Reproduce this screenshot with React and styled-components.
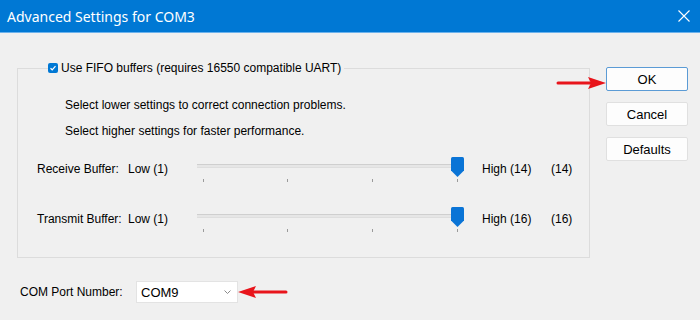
import React from "react";
import styled, { createGlobalStyle } from "styled-components";

const Global = createGlobalStyle`
  html, body {
    margin: 0;
    background: #f0f0f0;
  }
  body {
    font-family: "Liberation Sans", Arial, sans-serif;
    font-size: 12px;
    color: #000;
  }
`;

const Window = styled.div`
  width: 700px;
  height: 320px;
  background: #f0f0f0;
  overflow: hidden;
`;

const TitleBar = styled.div`
  height: 32px;
  background: #0078d4;
  border-bottom: 1px solid #6cb2ec;
  display: flex;
  align-items: center;
  justify-content: space-between;
  padding: 0 10px 0 7px;
  color: #fff;
  font-family: "Noto Sans", "Open Sans", sans-serif;
  font-size: 14px;
`;

const Close = styled.svg`
  width: 12px;
  height: 12px;
`;

const Body = styled.div`
  display: flex;
  align-items: flex-start;
  padding-left: 17px;
`;

const LeftCol = styled.div`
  display: flex;
  flex-direction: column;
`;

const Group = styled.fieldset`
  margin: 28px 0 0 0;
  padding: 0 0 13px 19px;
  width: 552px;
  min-width: 0;
  border: 1px solid #dcdcdc;
`;

const Legend = styled.legend`
  margin-left: 11px;
  padding: 0 3px 0 0;
  line-height: 14px;
  display: flex;
  align-items: center;
  gap: 3px;
`;

const Check = styled.span`
  width: 10px;
  height: 10px;
  border-radius: 2px;
  background: #0078d4;
  display: inline-flex;
  align-items: center;
  justify-content: center;
`;

const Notes = styled.div`
  margin-top: 17px;
  padding-left: 28px;
`;

const Note = styled.div`
  height: 26px;
  line-height: 26px;
`;

const SliderRow = styled.div`
  display: grid;
  grid-template-columns: 91px 69px 285px 69px auto;
  align-items: center;
  height: 50px;
`;

const Slider = styled.div`
  position: relative;
  width: 265px;
  height: 26px;
`;

const Track = styled.div`
  position: absolute;
  left: 0;
  right: 0;
  top: 8px;
  height: 2px;
  background: #e6e6e6;
  border-top: 1px solid #cfcfcf;
  border-bottom: 1px solid #dedede;
`;

const Tick = styled.span`
  position: absolute;
  top: 23px;
  width: 1px;
  height: 3px;
  background: #9a9a9a;
`;

const Thumb = styled.svg`
  position: absolute;
  top: 1px;
  width: 13px;
  height: 20px;
`;

const PortRow = styled.div`
  display: flex;
  align-items: center;
  margin-top: 23px;
  padding-left: 3px;
  height: 22px;
`;

const PortLabel = styled.span`
  width: 116px;
`;

const Select = styled.div`
  background: #fff;
  border: 1px solid #e3e3e3;
  display: flex;
  align-items: center;
  justify-content: space-between;
  padding: 0 6px 0 4px;
  box-sizing: border-box;
  width: 102px;
  height: 22px;
  font-size: 13px;
`;

const Buttons = styled.div`
  display: flex;
  flex-direction: column;
  gap: 11px;
  margin: 34px 0 0 16px;
`;

const Button = styled.button`
  position: relative;
  width: 82px;
  height: 24px;
  background: #fdfdfd;
  border: 1px solid ${(p) => (p.$primary ? "#5b9bd5" : "#e0e0e0")};
  border-radius: 2px;
  font-family: "Liberation Sans", Arial, sans-serif;
  font-size: 13px;
  color: #000;
  padding: 0;
`;

const ArrowSvg = styled.svg`
  width: 50px;
  height: 12px;
  flex: none;
`;

const OkArrow = styled(ArrowSvg)`
  position: absolute;
  right: 100%;
  top: 9px;
  margin-right: 1px;
`;

function Arrow({ as: Comp = ArrowSvg, flip }) {
  return (
    <Comp viewBox="0 0 50 12">
      <g transform={flip ? "translate(50 0) scale(-1 1)" : undefined}>
        <line x1="2" y1="6" x2="36" y2="6" stroke="#e8141b" strokeWidth="3" strokeLinecap="round" />
        <polygon points="50,6 32,0 35,6 32,12" fill="#e8141b" />
      </g>
    </Comp>
  );
}

function BufferSlider() {
  return (
    <Slider>
      <Track />
      {[6, 90, 175, 260].map((x) => (
        <Tick key={x} style={{ left: x }} />
      ))}
      <Thumb viewBox="0 0 13 20" style={{ left: 254 }}>
        <path d="M1.5 0H11.5Q13 0 13 1.5V13.5L6.5 20L0 13.5V1.5Q0 0 1.5 0Z" fill="#0a74d6" />
      </Thumb>
    </Slider>
  );
}

const buffers = [
  { label: "Receive Buffer:", high: 14 },
  { label: "Transmit Buffer:", high: 16 },
];

export default function App() {
  return (
    <Window>
      <Global />
      <TitleBar>
        <span>Advanced Settings for COM3</span>
        <Close viewBox="0 0 12 12">
          <path d="M0.5 0.5L11.5 11.5M11.5 0.5L0.5 11.5" stroke="#fff" strokeWidth="1.1" />
        </Close>
      </TitleBar>
      <Body>
        <LeftCol>
          <Group>
            <Legend>
              <Check>
                <svg width="8" height="8" viewBox="0 0 8 8">
                  <path d="M1.5 4.2L3.2 5.8L6.5 2.2" stroke="#fff" strokeWidth="1.2" fill="none" />
                </svg>
              </Check>
              Use FIFO buffers (requires 16550 compatible UART)
            </Legend>
            <Notes>
              <Note>Select lower settings to correct connection problems.</Note>
              <Note>Select higher settings for faster performance.</Note>
            </Notes>
            {buffers.map((b) => (
              <SliderRow key={b.label}>
                <span>{b.label}</span>
                <span>Low (1)</span>
                <BufferSlider />
                <span>High ({b.high})</span>
                <span>({b.high})</span>
              </SliderRow>
            ))}
          </Group>
          <PortRow>
            <PortLabel>COM Port Number:</PortLabel>
            <Select>
              <span>COM9</span>
              <svg width="7" height="4" viewBox="0 0 7 4">
                <path d="M0.5 0.5L3.5 3.5L6.5 0.5" stroke="#8a8a8a" fill="none" />
              </svg>
            </Select>
            <Arrow flip />
          </PortRow>
        </LeftCol>
        <Buttons>
          <Button $primary>
            <Arrow as={OkArrow} />
            OK
          </Button>
          <Button>Cancel</Button>
          <Button>Defaults</Button>
        </Buttons>
      </Body>
    </Window>
  );
}
